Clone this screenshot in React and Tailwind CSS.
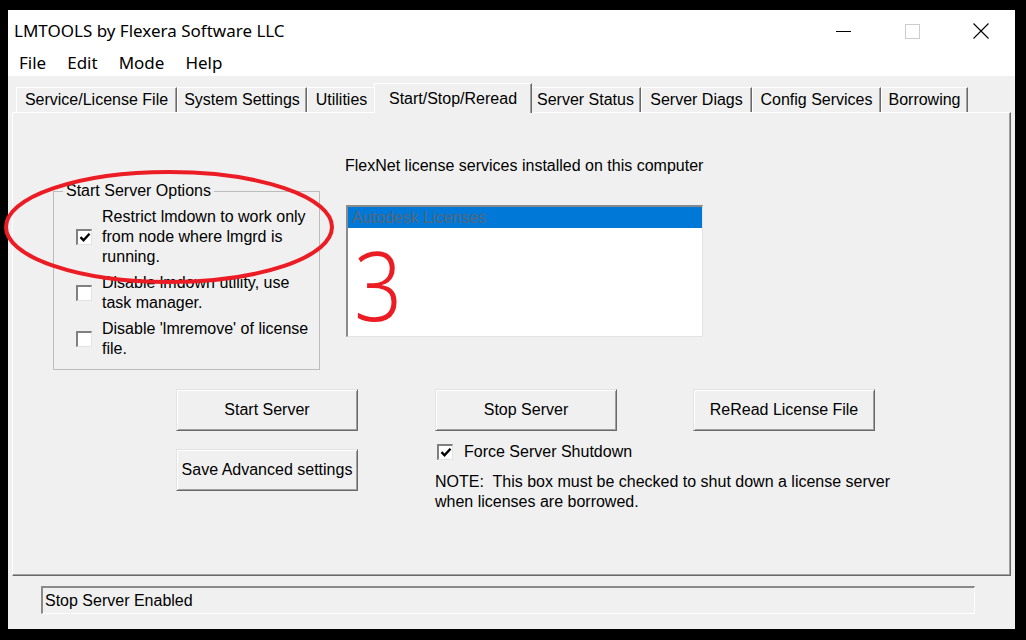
import React from 'react';

const sans = "[font-family:'Liberation_Sans',Arial,sans-serif]";

const tabs = [
  { label: 'Service/License File', cls: 'w-[161px]' },
  { label: 'System Settings', cls: 'w-[130px]' },
  { label: 'Utilities', cls: 'w-[69px]' },
  { label: 'Start/Stop/Reread', cls: 'w-[158px]', active: true },
  { label: 'Server Status', cls: 'w-[111px]' },
  { label: 'Server Diags', cls: 'w-[111px]' },
  { label: 'Config Services', cls: 'w-[129px]' },
  { label: 'Borrowing', cls: 'w-[87px]' },
];

const CheckBox = ({ checked }) => (
  <span className="shrink-0 w-[16px] h-[16px] bg-white border-t-2 border-l-2 border-r border-b border-t-[#808080] border-l-[#808080] border-r-[#e3e3e3] border-b-[#e3e3e3] flex items-center justify-center">
    {checked && (
      <svg width="12" height="11" viewBox="0 0 12 11">
        <path d="M1.5 5.2 L4.5 8.3 L10.5 1.8" fill="none" stroke="#000" strokeWidth="2.4" />
      </svg>
    )}
  </span>
);

const WinButton = ({ children }) => (
  <button className="w-[182px] h-[42px] bg-[#f0f0f0] border border-t-[#e3e3e3] border-l-[#e3e3e3] border-r-[#696969] border-b-[#696969] shadow-[inset_1px_1px_0_#ffffff,inset_-1px_-1px_0_#a0a0a0] text-[16px] text-black">
    {children}
  </button>
);

const Option = ({ checked, children }) => (
  <div className="flex items-center">
    <CheckBox checked={checked} />
    <span className="ml-[10px] w-[210px] leading-[20px]">{children}</span>
  </div>
);

export default function App() {
  return (
    <div className={`relative w-[1026px] h-[640px] bg-black pt-[10px] pl-[8px] overflow-hidden ${sans}`}>
      <div className="w-[1007px] h-[619px] bg-[#f0f0f0] flex flex-col text-black">
        {/* title bar */}
        <div className="h-[42px] bg-white flex items-center justify-between">
          <span className="pl-[6px] text-[17px] [font-family:'Noto_Sans',sans-serif] text-black">
            LMTOOLS by Flexera Software LLC
          </span>
          <div className="flex h-full">
            <div className="w-[69px] flex items-center justify-center">
              <span className="block w-[15px] h-px bg-black" />
            </div>
            <div className="w-[69px] flex items-center justify-center">
              <span className="block w-[15px] h-[15px] border border-[#cccccc]" />
            </div>
            <div className="w-[68px] flex items-center justify-center">
              <svg width="16" height="16" viewBox="0 0 16 16">
                <path d="M0.5 0.5 L15.5 15.5 M15.5 0.5 L0.5 15.5" stroke="#000" strokeWidth="1.1" />
              </svg>
            </div>
          </div>
        </div>

        {/* menu bar */}
        <div className="h-[24px] bg-white flex items-start pl-[1px] text-[17px] [font-family:'Noto_Sans',sans-serif] leading-[22px]">
          {['File', 'Edit', 'Mode', 'Help'].map((m) => (
            <span key={m} className="pl-[10px] pr-[11px]">{m}</span>
          ))}
        </div>

        {/* client area */}
        <div className="flex-1 px-[4px] flex flex-col">
          <div className="h-[36px] flex items-end pl-[4px] text-[16px]">
            {tabs.map((t) =>
              t.active ? (
                <div
                  key={t.label}
                  className={`${t.cls} -mx-[2px] h-[30px] -mb-px relative z-10 bg-[#f0f0f0] border-t border-l border-white border-r border-r-[#696969] shadow-[inset_-1px_0_0_#a0a0a0] flex items-start justify-center pt-[3px]`}
                >
                  {t.label}
                </div>
              ) : (
                <div
                  key={t.label}
                  className={`${t.cls} h-[25px] bg-[#f0f0f0] border-t border-l border-white border-r border-r-[#696969] shadow-[inset_-1px_0_0_#a0a0a0] flex items-center justify-center`}
                >
                  {t.label}
                </div>
              )
            )}
          </div>

          {/* tab panel */}
          <div className="h-[464px] border border-t-white border-l-white border-r-[#696969] border-b-[#696969] shadow-[inset_-1px_-1px_0_#a0a0a0] flex flex-col pt-[43px] text-[16px]">
            <div className="flex items-start">
              <fieldset className="ml-[40px] mt-[25px] w-[267px] border border-[#bcbcbc] pl-[22px] pb-[10px]">
                <legend className="-ml-[13px] px-[3px] leading-[20px]">Start Server Options</legend>
                <div className="flex flex-col gap-[6px] pt-[6px]">
                  <Option checked>
                    Restrict lmdown to work only from node where lmgrd is running.
                  </Option>
                  <Option>Disable lmdown utility, use task manager.</Option>
                  <Option>Disable 'lmremove' of license file.</Option>
                </div>
              </fieldset>

              <div className="ml-[25px] flex flex-col">
                <span className="leading-[20px]">FlexNet license services installed on this computer</span>
                <div className="relative mt-[29px] ml-px w-[357px] h-[132px] bg-white border-t-2 border-l-2 border-r border-b border-t-[#8a8a8a] border-l-[#8a8a8a] border-r-[#e3e3e3] border-b-[#e3e3e3]">
                  <div className="h-[21px] bg-[#0078d7] text-[#56677a] leading-[21px] pl-[4px]">Autodesk Licenses</div>
                  <span className="absolute left-[6px] top-[29px] origin-left scale-x-[0.88] text-[96px] leading-none font-light [font-family:'Noto_Sans',sans-serif] text-[#ec1c24]">3</span>
                </div>
              </div>
            </div>

            <div className="flex mt-[19px] ml-[163px]">
              <div className="flex flex-col gap-[18px]">
                <WinButton>Start Server</WinButton>
                <WinButton>Save Advanced settings</WinButton>
              </div>
              <div className="ml-[77px] flex flex-col">
                <div className="flex gap-[76px]">
                  <WinButton>Stop Server</WinButton>
                  <WinButton>ReRead License File</WinButton>
                </div>
                <div className="flex items-center mt-[11px] ml-[2px] h-[20px]">
                  <CheckBox checked />
                  <span className="ml-[11px]">Force Server Shutdown</span>
                </div>
                <p className="mt-[10px] leading-[20px] whitespace-pre">
                  {'NOTE:  This box must be checked to shut down a license server\nwhen licenses are borrowed.'}
                </p>
              </div>
            </div>
          </div>

          {/* status bar */}
          <div className="mt-[10px] ml-[29px] w-[934px] h-[28px] bg-[#f0f0f0] border-t-2 border-l-2 border-r border-b border-t-[#8a8a8a] border-l-[#8a8a8a] border-r-white border-b-white flex items-center pl-[2px] text-[16px]">
            Stop Server Enabled
          </div>
        </div>
      </div>

      {/* red annotation */}
      <svg className="absolute inset-0 pointer-events-none z-20" width="1026" height="640">
        <ellipse cx="169" cy="227" rx="163" ry="55" fill="none" stroke="#ec1c24" strokeWidth="4" />
      </svg>
    </div>
  );
}
